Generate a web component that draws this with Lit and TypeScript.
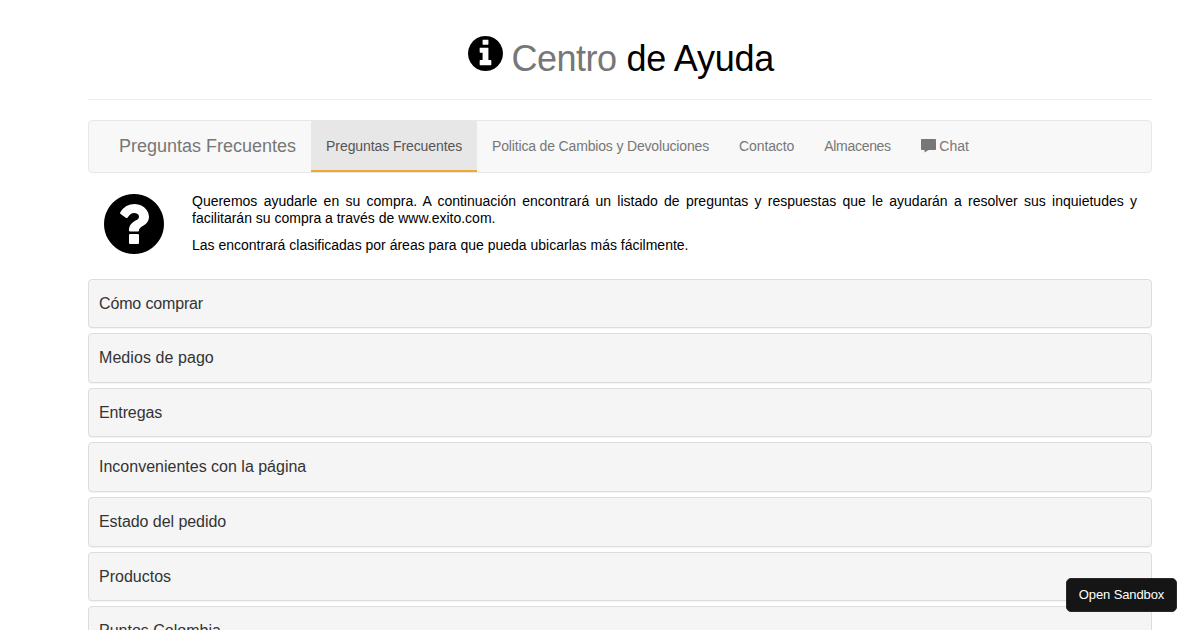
import { LitElement, html, css } from "lit";
import { customElement } from "lit/decorators.js";

// Letter-spacing per label compensates for the reference's hinted glyph advances.
const panels: [string, number][] = [
  ["Cómo comprar", -0.15],
  ["Medios de pago", 0.07],
  ["Entregas", -0.12],
  ["Inconvenientes con la página", 0],
  ["Estado del pedido", -0.06],
  ["Productos", 0],
  ["Puntos Colombia", 0],
];
const links: [string, number][] = [
  ["Politica de Cambios y Devoluciones", -0.165],
  ["Contacto", -0.1],
  ["Almacenes", -0.3],
];

@customElement("app-root")
export class AppRoot extends LitElement {
  static styles = css`
    :host { display: block; position: relative; height: 630px; overflow: hidden; background: #fff; font-family: "Liberation Sans", Arial, sans-serif; font-size: 14px; color: #333; }
    * { box-sizing: border-box; }
    .page { margin: 0 48px 0 88px; }
    .head { height: 100px; border-bottom: 1px solid #eee; padding: 36px 0 0 2px; display: flex; justify-content: center; align-items: flex-start; }
    h1 { margin: 0; font-size: 36px; font-weight: 400; line-height: 46px; color: #000; }
    h1 .g { color: #777; letter-spacing: -0.5px; }
    h1 .k { letter-spacing: -0.25px; }
    h1 svg { width: 35px; height: 35px; vertical-align: 0; margin-right: -1.5px; }
    .nav { margin-top: 20px; height: 53px; background: #f8f8f8; border: 1px solid #e7e7e7; border-radius: 4px; display: flex; padding-left: 15px; }
    .brand { font-size: 18px; line-height: 50px; color: #777; padding: 0 15px; }
    .nav a { font-size: 14px; line-height: 50px; color: #777; padding: 0 15px; display: flex; align-items: flex-start; height: 51px; }
    .nav a.active { color: #555; background: #e7e7e7; border-bottom: 2px solid #f0a92e; letter-spacing: -0.09px; }
    .nav a svg { width: 15px; height: 15px; margin: 17px 3.5px 0 0; }
    .intro { display: flex; padding: 20px 15px 0 16px; height: 105.6px; color: #000; }
    .intro svg { width: 60px; height: 60px; flex: none; margin: 1px 28px 0 0; }
    .intro p { margin: 0 0 9.6px; line-height: 17px; text-align: justify; font-size: 14px; }
    .intro .text { flex: 1; }
    .panel { height: 49.6px; margin-bottom: 5px; background: #f5f5f5; border: 1px solid #ddd; border-radius: 4px; padding: 15px 10px; font-size: 16px; line-height: 17.6px; color: #333; box-shadow: 0 1px 1px rgba(0,0,0,.05); }
    .sandbox { position: absolute; left: 1066px; top: 578px; width: 111px; height: 34px; padding-bottom: 1px; background: #151515; color: #fff; border-radius: 5px; font-size: 13px; letter-spacing: -0.12px; display: flex; align-items: center; justify-content: center; border: 1px solid #2a2a2a; }
  `;

  render() {
    return html`
      <div class="page">
        <div class="head">
          <h1>
            <svg viewBox="128 128 1536 1536"><path fill="#000" d="M1152 1376v-160q0-14-9-23t-23-9h-96v-512q0-14-9-23t-23-9h-320q-14 0-23 9t-9 23v160q0 14 9 23t23 9h96v320h-96q-14 0-23 9t-9 23v160q0 14 9 23t23 9h448q14 0 23-9t9-23zm-128-896v-160q0-14-9-23t-23-9h-192q-14 0-23 9t-9 23v160q0 14 9 23t23 9h192q14 0 23-9t9-23zm640 416q0 209-103 385.500t-279.500 279.500-385.500 103-385.500-103-279.500-279.500-103-385.500 103-385.500 279.500-279.500 385.500-103 385.500 103 279.500 279.500 103 385.500z"/></svg>
            <span class="g">Centro</span> <span class="k">de Ayuda</span>
          </h1>
        </div>
        <nav class="nav">
          <div class="brand">Preguntas Frecuentes</div>
          <a class="active">Preguntas Frecuentes</a>
          ${links.map(([l, s]) => html`<a style="letter-spacing:${s}px">${l}</a>`)}
          <a><svg viewBox="0 0 15 15"><path fill="#777" d="M1 1h13c.6 0 1 .4 1 1v9c0 .6-.4 1-1 1H7.500L3.500 14.500V12H1c-.6 0-1-.4-1-1V2c0-.6.4-1 1-1z"/></svg>Chat</a>
        </nav>
        <div class="intro">
          <svg viewBox="128 128 1536 1536"><path fill="#000" d="M1024 1376v-192q0-14-9-23t-23-9h-192q-14 0-23 9t-9 23v192q0 14 9 23t23 9h192q14 0 23-9t9-23zm256-672q0-88-55.500-163t-138.500-116-170-41q-243 0-371 213-15 24 8 42l132 100q7 6 19 6 16 0 25-12 53-68 86-92 34-24 86-24 48 0 85.500 26t37.500 59q0 38-20 61t-68 45q-63 28-115.500 86.500t-52.500 125.500v36q0 14 9 23t23 9h192q14 0 23-9t9-23q0-19 21.500-49.500t54.500-49.500q32-18 49-28.500t46-35 44.500-48 28-60.500 12.500-81zm384 192q0 209-103 385.500t-279.500 279.500-385.500 103-385.500-103-279.500-279.500-103-385.500 103-385.500 279.500-279.500 385.500-103 385.500 103 279.500 279.500 103 385.500z"/></svg>
          <div class="text">
            <p>Queremos ayudarle en su compra. A continuación encontrará un listado de preguntas y respuestas que le ayudarán a resolver sus inquietudes y facilitarán su compra a través de www.exito.com.</p>
            <p>Las encontrará clasificadas por áreas para que pueda ubicarlas más fácilmente.</p>
          </div>
        </div>
        ${panels.map(([p, s]) => html`<div class="panel" style="letter-spacing:${s}px">${p}</div>`)}
      </div>
      <div class="sandbox">Open Sandbox</div>
    `;
  }
}
